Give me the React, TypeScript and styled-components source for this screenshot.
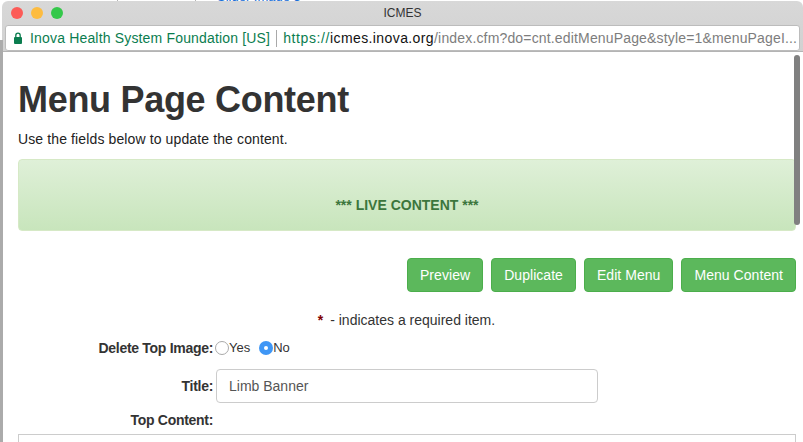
import React from "react";
import styled, { createGlobalStyle } from "styled-components";

const Global = createGlobalStyle`
  html, body { margin: 0; padding: 0; background: #fff; }
  body { width: 803px; height: 442px; overflow: hidden; font-family: "Liberation Sans", Arial, sans-serif; -webkit-font-smoothing: antialiased; }
  * { box-sizing: border-box; }
`;

const Desktop = styled.div`
  width: 803px;
  height: 442px;
  padding-top: 1px;
  background: #fff;
  overflow: hidden;
  position: relative;
`;

const BehindLink = styled.span`
  position: absolute;
  left: 217px;
  top: -10px;
  font-size: 13px;
  line-height: 14px;
  color: #1a6fd8;
`;

const BehindTick = styled.span<{ $x: number }>`
  position: absolute;
  left: ${(p) => p.$x}px;
  top: 0;
  width: 1px;
  height: 2px;
  background: #b5b5b5;
`;

const Window = styled.div`
  width: 801px;
  height: 441px;
  margin-left: 2px;
  border-radius: 6px 6px 0 0;
  overflow: hidden;
  position: relative;
  background: #fff;
`;

const TitleBar = styled.div`
  height: 51px;
  padding: 0 0 0 3px;
  background: linear-gradient(#d8d8d8, #d1d1d1);
  border-bottom: 1px solid #b4b4b4;
  display: flex;
  flex-direction: column;
`;

const TitleRow = styled.div`
  height: 24px;
  display: flex;
  align-items: center;
  position: relative;
  padding-left: 6px;
  gap: 8px;
`;

const Light = styled.span<{ $c: string }>`
  width: 12px;
  height: 12px;
  border-radius: 50%;
  background: ${(p) => p.$c};
`;

const WindowTitle = styled.div`
  position: absolute;
  left: -3px;
  right: 0;
  top: 5px;
  text-align: center;
  font-size: 12px;
  line-height: 15px;
  color: #333;
`;

const AddressBar = styled.div`
  height: 26px;
  width: 795px;
  background: #fff;
  border: 1px solid #bcbcbc;
  border-radius: 3px;
  display: flex;
  align-items: center;
  padding-left: 7px;
  font-size: 14px;
  white-space: nowrap;
  overflow: hidden;
`;

const Identity = styled.span`
  color: #0b7d4f;
  margin-left: 7px;
  letter-spacing: 0.17px;
`;

const Divider = styled.span`
  width: 1px;
  height: 17px;
  background: #a9a9a9;
  margin: 0 6px;
`;

const Scheme = styled.span`color: #0b7d4f; letter-spacing: 0.6px;`;
const Host = styled.span`color: #111; letter-spacing: 0.4px;`;
const Rest = styled.span`color: #7d7d7d; letter-spacing: 0.16px;`;

const Page = styled.div`
  height: 390px;
  padding: 0 7px 0 16px;
  position: relative;
  overflow: hidden;
  color: #333;
`;

const LeftEdge = styled.div`
  position: absolute;
  left: 0;
  top: 40px;
  width: 3px;
  height: 402px;
  background: #ababab;
`;

const Scrollbar = styled.div`
  position: absolute;
  top: 3px;
  right: 3px;
  width: 6px;
  height: 170px;
  border-radius: 3px;
  background: #808080;
`;

const Heading = styled.h1`
  margin: 26px 0 0;
  font-size: 36px;
  line-height: 44px;
  font-weight: 700;
  letter-spacing: -0.3px;
  color: #333;
`;

const Intro = styled.p`
  margin: 7px 0 0;
  font-size: 14px;
  line-height: 20px;
  letter-spacing: 0.12px;
  color: #222;
`;

const Alert = styled.div`
  margin-top: 10px;
  height: 72px;
  border: 1px solid #d6e9c6;
  border-radius: 4px;
  background: linear-gradient(#dff0d8, #c8e5bc);
  color: #3c763d;
  font-size: 14px;
  font-weight: 700;
  text-align: center;
  padding-top: 35px;
  line-height: 20px;
`;

const Actions = styled.div`
  margin-top: 27px;
  display: flex;
  justify-content: flex-end;
  gap: 8px;
`;

const GreenButton = styled.button`
  height: 34px;
  padding: 0 12px;
  background: #5cb85c;
  border: 1px solid #4cae4c;
  border-radius: 4px;
  color: #fff;
  letter-spacing: 0.05px;
  font: 14px "Liberation Sans", Arial, sans-serif;
`;

const Required = styled.div`
  margin-top: 18px;
  padding-right: 1px;
  text-align: center;
  font-size: 14px;
  line-height: 20px;
  color: #333;
`;

const Star = styled.b`
  color: #800000;
  margin-right: 3px;
`;

const Row = styled.div<{ $mt: number }>`
  display: flex;
  align-items: center;
  margin-top: ${(p) => p.$mt}px;
`;

const Label = styled.label`
  width: 195px;
  text-align: right;
  font-size: 14px;
  font-weight: 700;
  line-height: 20px;
  letter-spacing: -0.3px;
  color: #333;
`;

const RadioGroup = styled.div`
  display: flex;
  align-items: center;
  margin-left: 2px;
  font-size: 13px;
  line-height: 20px;
`;

const RadioOff = styled.span`
  width: 14px;
  height: 14px;
  border-radius: 50%;
  background: #fff;
  border: 1px solid #aaa;
`;

const RadioOn = styled.span`
  width: 14px;
  height: 14px;
  border-radius: 50%;
  background: #3f96f5;
  display: flex;
  align-items: center;
  justify-content: center;
  margin-left: 9px;
  &::after {
    content: "";
    width: 4px;
    height: 4px;
    border-radius: 50%;
    background: #fff;
  }
`;

const TextInput = styled.input`
  width: 382px;
  height: 34px;
  margin-left: 3px;
  padding: 0 12px;
  border: 1px solid #ccc;
  border-radius: 4px;
  color: #555;
  font: 14px "Liberation Sans", Arial, sans-serif;
`;

const Editor = styled.div`
  margin-top: 4px;
  height: 40px;
  border: 1px solid #ccc;
  background: #fff;
`;

export default function App() {
  return (
    <Desktop>
      <Global />
      <BehindLink>Slider Image 3</BehindLink>
      <BehindTick $x={117} />
      <BehindTick $x={195} />
      <Window>
        <TitleBar>
          <TitleRow>
            <Light $c="#fc5b57" />
            <Light $c="#fdbc40" />
            <Light $c="#34c84a" />
            <WindowTitle>ICMES</WindowTitle>
          </TitleRow>
          <AddressBar>
            <svg width="10" height="12" viewBox="0 0 10 12" aria-hidden="true">
              <rect x="1" y="5" width="8" height="7" rx="1" fill="#0b7d4f" />
              <path d="M2.8 5.5V3.4a2.2 2.2 0 0 1 4.4 0v2.1" fill="none" stroke="#0b7d4f" strokeWidth="1.3" />
            </svg>
            <Identity>Inova Health System Foundation [US]</Identity>
            <Divider />
            <Scheme>https://</Scheme>
            <Host>icmes.inova.org</Host>
            <Rest>/index.cfm?do=cnt.editMenuPage&amp;style=1&amp;menuPageI...</Rest>
          </AddressBar>
        </TitleBar>
        <Page>
          <Scrollbar />
          <Heading>Menu Page Content</Heading>
          <Intro>Use the fields below to update the content.</Intro>
          <Alert>*** LIVE CONTENT ***</Alert>
          <Actions>
            <GreenButton>Preview</GreenButton>
            <GreenButton>Duplicate</GreenButton>
            <GreenButton>Edit Menu</GreenButton>
            <GreenButton>Menu Content</GreenButton>
          </Actions>
          <Required><Star>*</Star> - indicates a required item.</Required>
          <Row $mt={8}>
            <Label>Delete Top Image:</Label>
            <RadioGroup>
              <RadioOff />Yes
              <RadioOn />No
            </RadioGroup>
          </Row>
          <Row $mt={11}>
            <Label>Title:</Label>
            <TextInput defaultValue="Limb Banner" />
          </Row>
          <Row $mt={7}>
            <Label>Top Content:</Label>
          </Row>
          <Editor />
        </Page>
      </Window>
      <LeftEdge />
    </Desktop>
  );
}
